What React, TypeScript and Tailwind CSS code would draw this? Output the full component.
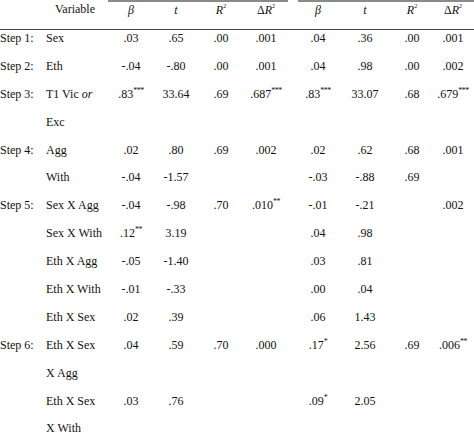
import React from "react";

type Row = { step: string; variable: React.ReactNode; values: string[] };

const rows: Row[] = [
  { step: "Step 1:", variable: "Sex", values: [".03", ".65", ".00", ".001", ".04", ".36", ".00", ".001"] },
  { step: "Step 2:", variable: "Eth", values: ["-.04", "-.80", ".00", ".001", ".04", ".98", ".00", ".002"] },
  {
    step: "Step 3:",
    variable: (
      <>
        T1 Vic <i>or</i>
      </>
    ),
    values: [".83***", "33.64", ".69", ".687***", ".83***", "33.07", ".68", ".679***"],
  },
  { step: "", variable: "Exc", values: [] },
  { step: "Step 4:", variable: "Agg", values: [".02", ".80", ".69", ".002", ".02", ".62", ".68", ".001"] },
  { step: "", variable: "With", values: ["-.04", "-1.57", "", "", "-.03", "-.88", ".69", ""] },
  { step: "Step 5:", variable: "Sex X Agg", values: ["-.04", "-.98", ".70", ".010**", "-.01", "-.21", "", ".002"] },
  { step: "", variable: "Sex X With", values: [".12**", "3.19", "", "", ".04", ".98", "", ""] },
  { step: "", variable: "Eth X Agg", values: ["-.05", "-1.40", "", "", ".03", ".81", "", ""] },
  { step: "", variable: "Eth X With", values: ["-.01", "-.33", "", "", ".00", ".04", "", ""] },
  { step: "", variable: "Eth X Sex", values: [".02", ".39", "", "", ".06", "1.43", "", ""] },
  { step: "Step 6:", variable: "Eth X Sex", values: [".04", ".59", ".70", ".000", ".17*", "2.56", ".69", ".006**"] },
  { step: "", variable: "X Agg", values: [] },
  { step: "", variable: "Eth X Sex", values: [".03", ".76", "", "", ".09*", "2.05", "", ""] },
  { step: "", variable: "X With", values: [] },
];

const cols = "grid grid-cols-[46px_62px_46px_44px_46px_44px_10px_40px_54px_40px_42px]";

function Value({ text }: { text: string }) {
  const m = text.match(/^(.*?)(\*+)$/);
  if (!m) return <span>{text}</span>;
  return (
    <span>
      {m[1]}
      <span className="relative top-[-5px] text-[8px] tracking-[-0.5px]">{m[2]}</span>
    </span>
  );
}

function Sq() {
  return <span className="relative top-[-6px] text-[6px] not-italic">2</span>;
}

export default function App() {
  const head = [
    <i>β</i>,
    <i>t</i>,
    <>
      <i>R</i>
      <Sq />
    </>,
    <>
      Δ<i>R</i>
      <Sq />
    </>,
  ];

  return (
    <div className="h-[437px] w-[474px] overflow-hidden bg-white text-[12px] text-[#111] [font-family:'Liberation_Serif',serif]">
      <div className={`${cols} h-[30px] border-b-[1.5px] border-[#444] leading-[14px]`}>
        <div />
        <div className="pt-[2px] pl-[9px]">Variable</div>
        {head.map((h, i) => (
          <div key={"a" + i} className="border-t-2 border-[#8a8a8a] pt-[1px] text-center">
            {h}
          </div>
        ))}
        <div />
        {head.map((h, i) => (
          <div key={"b" + i} className="border-t-2 border-[#8a8a8a] pt-[1px] text-center">
            {h}
          </div>
        ))}
      </div>
      {rows.map((r, i) => (
        <div key={i} className={`${cols} h-[27.9px] pt-[1px] leading-[14px]`}>
          <div className="whitespace-nowrap">{r.step}</div>
          <div className="whitespace-nowrap">{r.variable}</div>
          {[0, 1, 2, 3].map((j) => (
            <div key={j} className="text-center whitespace-nowrap">
              {r.values[j] ? <Value text={r.values[j]} /> : null}
            </div>
          ))}
          <div />
          {[4, 5, 6, 7].map((j) => (
            <div key={j} className="text-center whitespace-nowrap">
              {r.values[j] ? <Value text={r.values[j]} /> : null}
            </div>
          ))}
        </div>
      ))}
    </div>
  );
}
